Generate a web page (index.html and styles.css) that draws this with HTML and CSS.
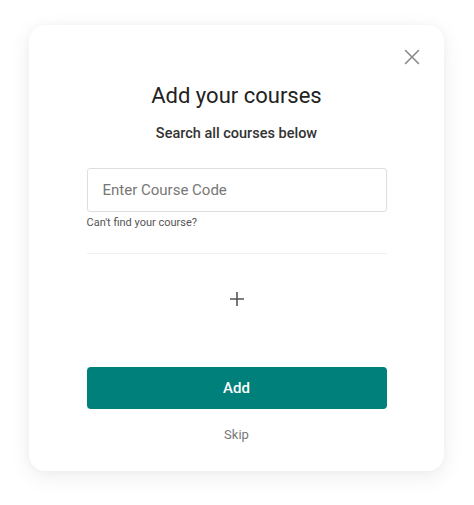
FILE: index.html
```html
<!DOCTYPE html>
<html>
<head>
<meta charset="utf-8">
<link rel="stylesheet" href="styles.css">
</head>
<body>
<div class="page">
  <div class="card">
    <div class="top">
      <button class="close" aria-label="Close">
        <svg width="16" height="16" viewBox="0 0 16 16"><path d="M1.5 1.5L14.5 14.5M14.5 1.5L1.5 14.5" stroke="#8a8a8a" stroke-width="1.6" fill="none" stroke-linecap="round"/></svg>
      </button>
    </div>
    <h1 class="title">Add your courses</h1>
    <p class="subtitle">Search all courses below</p>
    <div class="form">
      <div class="input">Enter Course Code</div>
      <div class="help">Can't find your course?</div>
      <div class="divider"></div>
      <div class="plus">
        <svg width="16" height="16" viewBox="0 0 16 16"><path d="M8 1V15M1 8H15" stroke="#555" stroke-width="1.6" fill="none"/></svg>
      </div>
      <button class="add">Add</button>
      <div class="skip">Skip</div>
    </div>
  </div>
</div>
</body>
</html>
```
FILE: styles.css
```css
html, body {
  margin: 0;
  padding: 0;
  background: #ffffff;
  font-family: Roboto, "Noto Sans", Arial, sans-serif;
}
.page {
  padding: 25px 30px 34px 29px;
}
.card {
  width: 415px;
  height: 446px;
  box-sizing: border-box;
  background: #fff;
  border-radius: 16px;
  box-shadow: 0 6px 22px rgba(0,0,0,0.07), 0 0 10px rgba(0,0,0,0.03);
  display: flex;
  flex-direction: column;
  align-items: center;
}
.top {
  align-self: stretch;
  display: flex;
  justify-content: flex-end;
  padding: 24px 24px 0 0;
  height: 16px;
}
.close {
  border: 0;
  background: none;
  padding: 0;
  width: 16px;
  height: 16px;
  display: block;
}
.close svg { display: block; }
.title {
  margin: 18px 0 0;
  font-size: 22px;
  font-weight: 400;
  color: #222;
  line-height: 26px;
}
.subtitle {
  margin: 16px 0 0;
  font-size: 14.5px;
  font-weight: 500;
  color: #333;
  line-height: 18px;
}
.form {
  width: 300px;
  margin-top: 25px;
  display: flex;
  flex-direction: column;
}
.input {
  height: 44px;
  box-sizing: border-box;
  border: 1px solid #dedede;
  border-radius: 3px;
  padding: 0 15px;
  display: flex;
  align-items: center;
  font-size: 15px;
  color: #777;
}
.help {
  margin-top: 4px;
  font-size: 11px;
  color: #555;
  line-height: 13px;
}
.divider {
  margin-top: 24px;
  height: 1px;
  background: #f0f0f0;
}
.plus {
  margin-top: 37px;
  align-self: center;
  height: 16px;
}
.plus svg { display: block; }
.add {
  margin-top: 60px;
  height: 42px;
  border: 0;
  border-radius: 4px;
  background: #00807b;
  color: #fff;
  font-family: Roboto, "Noto Sans", Arial, sans-serif;
  font-size: 15px;
  font-weight: 500;
}
.skip {
  margin-top: 18px;
  align-self: center;
  font-size: 13px;
  color: #777;
  line-height: 16px;
}
```
